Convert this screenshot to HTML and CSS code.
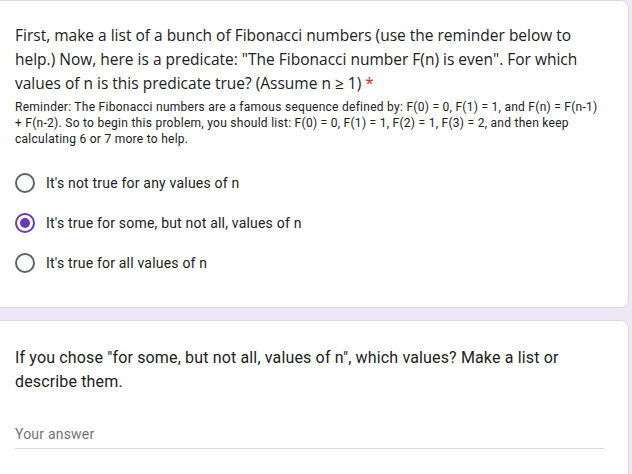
FILE: index.html
```html
<!DOCTYPE html>
<html lang="en">
<head>
    <meta charset="UTF-8">
    <meta name="viewport" content="width=device-width, initial-scale=1.0">
    <title>Fibonacci Quiz</title>
    <link rel="stylesheet" href="styles.css">
</head>
<body>

<div class="form">
    <div class="card">
        <div class="question-title">First, make a list of a bunch of Fibonacci numbers (use the reminder below to help.) Now, here is a predicate: "The Fibonacci number F(n) is even". For which values of n is this predicate true? (Assume n &ge; 1) <span class="required">*</span></div>
        <div class="question-help">Reminder: The Fibonacci numbers are a famous sequence defined by: F(0) = 0, F(1) = 1, and F(n) = F(n-1) + F(n-2). So to begin this problem, you should list: F(0) = 0, F(1) = 1, F(2) = 1, F(3) = 2, and then keep calculating 6 or 7 more to help.</div>

        <div class="options">
            <label class="option">
                <span class="radio"></span>
                <span class="option-text">It's not true for any values of n</span>
            </label>
            <label class="option">
                <span class="radio checked"></span>
                <span class="option-text">It's true for some, but not all, values of n</span>
            </label>
            <label class="option">
                <span class="radio"></span>
                <span class="option-text">It's true for all values of n</span>
            </label>
        </div>
    </div>

    <div class="card">
        <div class="question-title plain">If you chose "for some, but not all, values of n", which values? Make a list or describe them.</div>
        <div class="answer">Your answer</div>
    </div>
</div>

</body>
</html>
```

FILE: styles.css
```css
body {
    font-family: Roboto, Arial, sans-serif;
    background-color: #ede7f6;
    margin: 0;
    padding: 0;
    color: #202124;
    letter-spacing: 0.2px;
    overflow: hidden;
}
.form {
    margin-left: -10px;
    margin-right: 3px;
}
.card {
    background-color: #fff;
    border: 1px solid #dadce0;
    border-radius: 8px;
    padding: 22px 24px 24px 24px;
    margin-bottom: 12px;
}
.question-title {
    font-family: "Open Sans", sans-serif;
    font-size: 15.5px;
    line-height: 24px;
    letter-spacing: 0;
    color: #202124;
}
.question-title.plain {
    font-family: Roboto, sans-serif;
    font-size: 16px;
    letter-spacing: 0.15px;
    padding-top: 3px;
}
.required {
    color: #d93025;
}
.question-help {
    font-size: 12px;
    line-height: 16px;
    letter-spacing: 0.27px;
    margin-top: 4px;
}
.options {
    margin-top: 16px;
}
.option {
    display: flex;
    align-items: center;
    height: 40px;
    font-size: 14px;
}
.radio {
    width: 16px;
    height: 16px;
    border: 2px solid #5f6368;
    border-radius: 50%;
    position: relative;
    margin-right: 11px;
}
.radio.checked {
    border-color: #673ab7;
}
.radio.checked::after {
    content: "";
    position: absolute;
    top: 3px;
    left: 3px;
    width: 10px;
    height: 10px;
    border-radius: 50%;
    background-color: #673ab7;
}
.answer {
    margin-top: 30px;
    font-size: 14px;
    line-height: 20px;
    color: #70757a;
    padding-bottom: 4px;
    border-bottom: 1px solid #dadce0;
    margin-bottom: 40px;
}
```
